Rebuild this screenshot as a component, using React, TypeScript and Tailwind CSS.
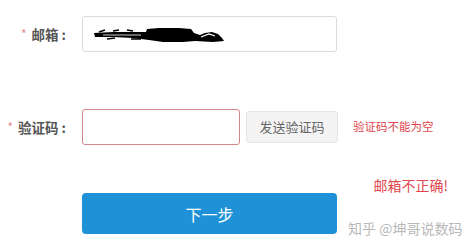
import React from 'react';

const font = { fontFamily: '"Noto Sans CJK SC", "Noto Sans", sans-serif' };

const Label: React.FC<{ text: string }> = ({ text }) => (
  <div className="w-[66px] flex items-center justify-end shrink-0">
    <span className="text-[#e58c95] text-[12px] mr-[5px] leading-none">*</span>
    <span className="text-[13.5px] font-bold text-[#555]">{text}</span>
  </div>
);

// redaction scribble over the email value
const Scribble = () => (
  <svg width="160" height="34" viewBox="0 0 160 34" className="absolute left-0 top-0">
    <path
      d="M11 16 L30 15 L63 15 L64 12 L76 11 L96 11 L108 12 L111 16 L117 18 L122 16 L129 15 L135 17 L139 21 L141 24 L130 25 L112 24 L100 25 L80 25 L66 23 L50 21 L30 20 L12 20 Z"
      fill="#000"
    />
    <path d="M16 15 L22 13 M30 14 L36 13 M44 13 L50 14 M24 22 L32 21 M48 22 L58 22" stroke="#000" strokeWidth="1.5" />
    <path d="M20 18 L58 18" stroke="#fff" strokeWidth="0.8" />
    <path d="M118 20 L126 17 L132 19" stroke="#fff" strokeWidth="1.2" fill="none" />
  </svg>
);

export default function App() {
  return (
    <div className="relative w-[474px] h-[249px] bg-white overflow-hidden" style={font}>
      <div className="flex flex-col pt-[16px]">
        {/* email */}
        <div className="flex items-center h-[36px]">
          <Label text="邮箱 :" />
          <div className="relative ml-[16px] w-[255px] h-[36px] border border-[#dcdcdc] rounded-[3px] bg-white">
            <Scribble />
          </div>
        </div>

        {/* code */}
        <div className="flex items-center h-[36px] mt-[57px]">
          <Label text="验证码 :" />
          <div className="ml-[16px] w-[158px] h-[36px] border border-[#d4868d] rounded-[3px] bg-white" />
          <button className="ml-[6px] w-[92px] h-[32px] bg-[#f4f4f4] border border-[#e6e6e6] rounded-[3px] text-[13px] text-[#666]">
            发送验证码
          </button>
          <span className="ml-[15px] text-[11.5px] text-[#e0474d]">验证码不能为空</span>
        </div>

        {/* email error */}
        <div className="mt-[33px] h-[15px] flex justify-end pr-[26px]">
          <span className="text-[14px] leading-[15px] text-[#e0474d]">邮箱不正确!</span>
        </div>

        {/* next */}
        <div className="pl-[82px]">
          <button className="w-[255px] h-[41px] bg-[#1f92d7] rounded-[4px] text-white text-[16px]">
            下一步
          </button>
        </div>
      </div>

      <div className="absolute left-[348px] top-[218px] text-[14px] text-[#b8b8b8] whitespace-nowrap">
        知乎 @坤哥说数码
      </div>
    </div>
  );
}
